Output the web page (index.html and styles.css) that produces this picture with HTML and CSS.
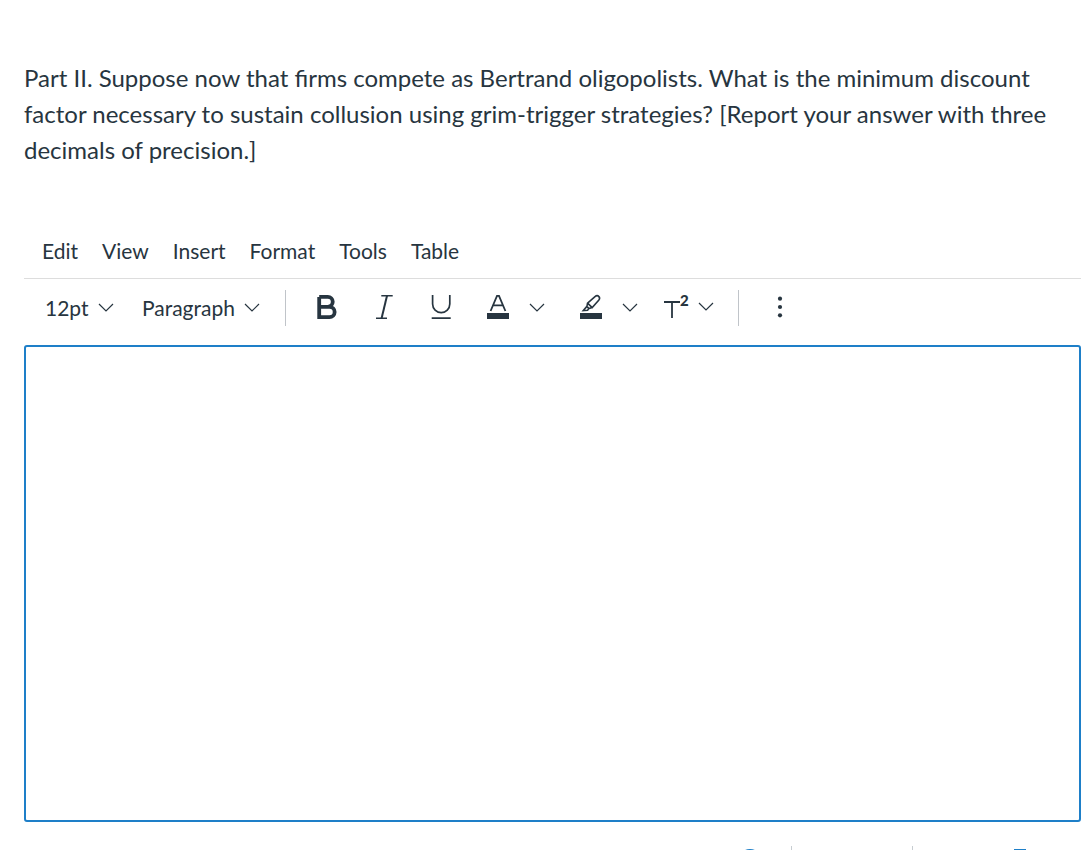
FILE: index.html
```html
<!DOCTYPE html>
<html lang="en">

<head>
    <meta charset="UTF-8">
    <meta name="viewport" content="width=device-width, initial-scale=1.0">
    <title>Quiz Question</title>
    <link rel="stylesheet" href="styles.css">
</head>

<body>
    <main class="question">
        <p class="question-text">Part II. Suppose now that firms compete as Bertrand oligopolists. What is the minimum discount factor necessary to sustain collusion using grim-trigger strategies? [Report your answer with three decimals of precision.]</p>

        <div class="editor">
            <div class="menubar">
                <button>Edit</button>
                <button>View</button>
                <button>Insert</button>
                <button>Format</button>
                <button>Tools</button>
                <button>Table</button>
            </div>

            <div class="toolbar">
                <div class="picker">
                    <select aria-label="Font size">
                        <option>12pt</option>
                    </select>
                    <svg class="chevron" viewBox="0 0 16 10"><path d="M1 1l7 7 7-7" /></svg>
                </div>
                <div class="picker">
                    <select aria-label="Block type">
                        <option>Paragraph</option>
                    </select>
                    <svg class="chevron" viewBox="0 0 16 10"><path d="M1 1l7 7 7-7" /></svg>
                </div>

                <div class="divider"></div>

                <div class="group">
                    <button class="tool" aria-label="Bold">
                        <svg class="icon" viewBox="0 0 24 24">
                            <path stroke-width="3.8" d="M4.2 1.9h8.6a4.7 4.7 0 0 1 0 9.9H4.2M12.8 11.8h1.7a5.1 5.1 0 0 1 0 10.3H4.2V1.9" />
                        </svg>
                    </button>
                    <button class="tool" aria-label="Italic">
                        <svg class="icon" viewBox="0 0 24 24">
                            <path stroke-width="1.6" d="M9.3 .8h11.4M4 23.2h11" />
                            <path stroke-width="2" d="M15 .8L9.6 23.2" />
                        </svg>
                    </button>
                    <button class="tool" aria-label="Underline">
                        <svg class="icon" viewBox="0 0 24 24">
                            <path stroke-width="1.7" d="M3.6 0v9a8.6 8.6 0 0 0 17.2 0V0M2.7 23.1h19" />
                        </svg>
                    </button>
                    <button class="tool" aria-label="Text color">
                        <svg class="icon" viewBox="0 0 24 24">
                            <path stroke-width="1.8" d="M4.6 16L11 .8h2L19.4 16M7 10.4h10" />
                            <rect x="1" y="18" width="22" height="6" />
                        </svg>
                    </button>
                    <button class="arrow" aria-label="Choose text color">
                        <svg class="chevron" viewBox="0 0 16 10"><path d="M1 1l7 7 7-7" /></svg>
                    </button>
                </div>

                <div class="group">
                    <button class="tool" aria-label="Highlight">
                        <svg class="icon" viewBox="0 0 24 24">
                            <path stroke-width="1.6" d="M8.6 8.2l7.4-6.600c1.300-1.100 3-1 3.900 0s.9 2.400-.2 3.700L13.200 12.600zM8.600 8.200l-.7 3.200 2 2.200 3.300-1M7.900 11.400L4.300 15.500l4.300-.3 1.300-1.600" />
                            <rect x="1" y="18" width="22" height="6" />
                        </svg>
                    </button>
                    <button class="arrow" aria-label="Choose highlight color">
                        <svg class="chevron" viewBox="0 0 16 10"><path d="M1 1l7 7 7-7" /></svg>
                    </button>
                </div>

                <button class="script" aria-label="Superscript">
                    <svg class="icon" viewBox="0 0 24 24">
                        <path stroke-width="1.8" d="M0 7h16M8 7v16" />
                        <text x="16" y="11">2</text>
                    </svg>
                    <svg class="chevron" viewBox="0 0 16 10"><path d="M1 1l7 7 7-7" /></svg>
                </button>

                <div class="divider"></div>

                <button class="tool more" aria-label="More">
                    <svg class="icon" viewBox="0 0 24 24">
                        <circle cx="12" cy="3.700" r="2.100" />
                        <circle cx="12" cy="12" r="2.100" />
                        <circle cx="12" cy="20.300" r="2.100" />
                    </svg>
                </button>
            </div>

            <textarea class="answer" aria-label="Answer"></textarea>

            <div class="statusbar">
                <button aria-label="Keyboard shortcuts">
                    <svg viewBox="0 0 24 24"><circle cx="12" cy="12" r="11" /></svg>
                </button>
                <div class="status-divider"></div>
                <div class="status-divider"></div>
                <button aria-label="Fullscreen">
                    <svg viewBox="0 0 24 24"><path d="M6 1h12" /></svg>
                </button>
            </div>
        </div>
    </main>
</body>

</html>
```
FILE: styles.css
```css
* {
    margin: 0;
    padding: 0;
    box-sizing: border-box;
}

body {
    height: 100vh;
    overflow: hidden;
    background: white;
    color: #273540;
    font-family: Lato, sans-serif;
}

.question {
    display: flex;
    flex-direction: column;
    height: 100%;
    padding: 60px 11px 0 24px;
}

.question-text {
    font-size: 24px;
    line-height: 36px;
    margin-bottom: 56px;
}

.editor {
    flex: 1;
    display: flex;
    flex-direction: column;
}

button,
select {
    border: none;
    background: none;
    color: inherit;
    font-family: inherit;
    font-size: 21px;
    line-height: 28px;
    cursor: pointer;
}

.menubar {
    display: flex;
    gap: 24px;
    height: 55px;
    padding: 0 18px 1px;
    border-bottom: 1px solid #dddddd;
}

.toolbar {
    display: flex;
    align-items: center;
    height: 66px;
    padding: 0 21px 8px;
}

.picker {
    position: relative;
    display: flex;
    align-items: center;
    margin-right: 28px;
}

.picker select {
    appearance: none;
    padding-right: 25px;
}

.picker .chevron {
    position: absolute;
    right: 0;
    pointer-events: none;
}

.chevron {
    width: 16px;
    height: 10px;
    fill: none;
    stroke: #273540;
    stroke-width: 1.2;
}

.divider {
    width: 1px;
    height: 36px;
    background: #c0c4c9;
}

.picker + .divider {
    margin-left: -3px;
    margin-right: 12px;
}

.group {
    display: flex;
    margin-right: 15px;
}

.tool,
.arrow,
.script {
    display: flex;
    align-items: center;
    justify-content: center;
    height: 36px;
}

.tool,
.script {
    padding-bottom: 2px;
}

.tool {
    width: 57px;
}

.arrow {
    width: 21px;
}

.script {
    gap: 10px;
    margin: 0 24px 0 9px;
}

.more {
    margin-left: 12px;
}

.icon {
    width: 24px;
    height: 24px;
    overflow: visible;
    fill: none;
    stroke: #273540;
}

.icon rect,
.icon circle,
.icon text {
    fill: #273540;
    stroke: none;
}

.icon text {
    font-size: 15px;
    font-weight: 900;
}

.answer {
    flex: 1;
    width: 100%;
    padding: 14px;
    border: 2px solid #1e7fc8;
    border-radius: 3px;
    outline: none;
    resize: none;
    font: 24px Lato, sans-serif;
    color: inherit;
}

/* only the top edge shows above the bottom of the window */
.statusbar {
    display: flex;
    justify-content: flex-end;
    height: 28px;
    padding: 24px 49px 0 0;
}

.statusbar button {
    width: 24px;
    height: 24px;
    margin-top: 3px;
}

.statusbar svg {
    display: block;
    fill: none;
    stroke: #1e7fc8;
    stroke-width: 2;
}

.status-divider {
    width: 1px;
    height: 30px;
    margin-left: 29px;
    background: #c7cdd1;
}

.status-divider + .status-divider {
    margin-left: 120px;
    margin-right: 95px;
}
```
